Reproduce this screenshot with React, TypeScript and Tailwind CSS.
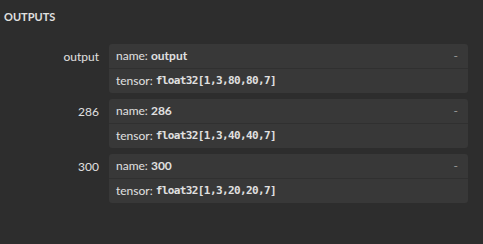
const outputs = [
  { label: "output", name: "output", tensor: "float32[1,3,80,80,7]" },
  { label: "286", name: "286", tensor: "float32[1,3,40,40,7]" },
  { label: "300", name: "300", tensor: "float32[1,3,20,20,7]" },
];

export default function App() {
  return (
    <div className="h-[244px] w-[483px] bg-[#2d2d2d] font-['Lato','Open_Sans',sans-serif] text-[12px] text-[#e0e0e0]">
      <div className="px-[4px] pt-[9px] text-[11px] font-bold leading-[16px]">OUTPUTS</div>
      <div className="mt-[19px] flex flex-col gap-[6px] pr-[15px]">
        {outputs.map((o) => (
          <div key={o.label} className="flex">
            <div className="w-[99px] shrink-0 pt-[3px] text-right leading-[20px]">{o.label}</div>
            <div className="ml-[10px] flex-1 overflow-hidden rounded-[3px] bg-[#383838]">
              <div className="flex h-[25px] items-center justify-between border-b border-[#303030] pl-[7px] pr-[10px]">
                <span>
                  name: <b>{o.name}</b>
                </span>
                <span className="text-[#9a9a9a]">-</span>
              </div>
              <div className="flex h-[24px] items-center pl-[7px]">
                <span className="mr-[3px]">tensor:</span>
                <span className="font-['DejaVu_Sans_Mono',monospace] text-[11px] font-bold tracking-[-0.6px]">{o.tensor}</span>
              </div>
            </div>
          </div>
        ))}
      </div>
    </div>
  );
}
